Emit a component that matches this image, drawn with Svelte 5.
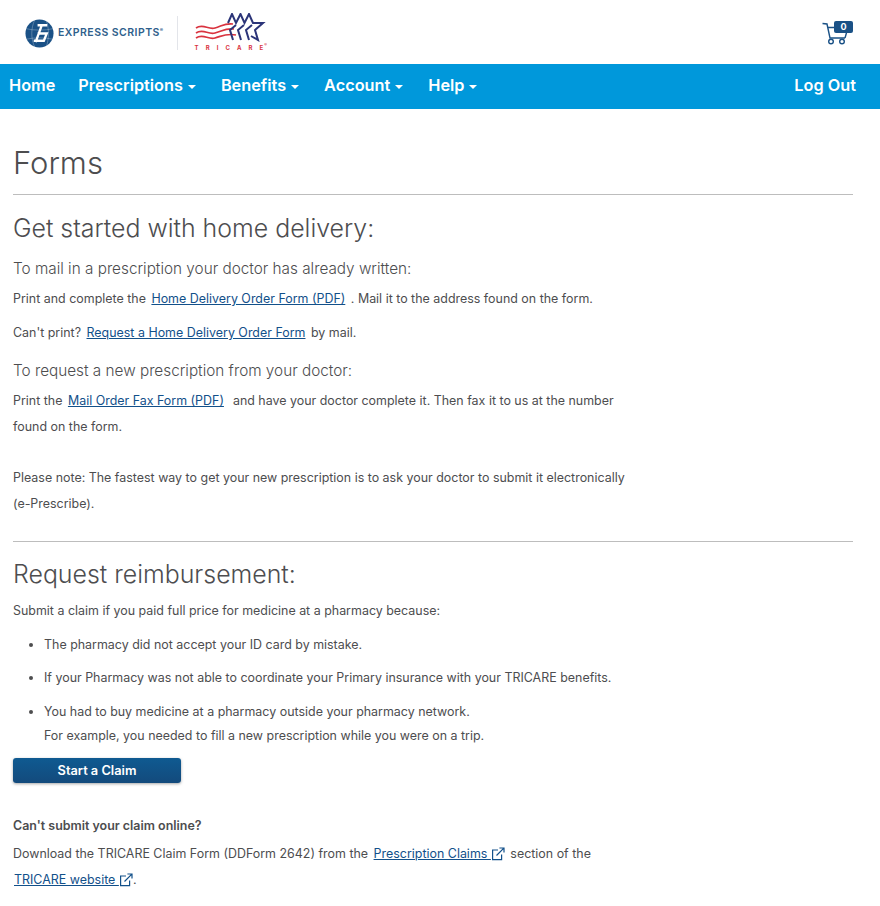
<script>
  const navItems = [
    { label: 'Prescriptions' },
    { label: 'Benefits' },
    { label: 'Account' },
    { label: 'Help' }
  ];
  const chevrons = [0, 1, 2];
</script>

{#snippet extIcon()}
  <svg class="ext" viewBox="0 0 14 14" width="14" height="14" fill="none" stroke="#12508a" stroke-width="1.2">
    <path d="M7 3H1.6v9.6h9V7.5" />
    <path d="M5.5 8.5 12.6 1.4M8.4 1h4.6v4.6" />
  </svg>
{/snippet}

<header class="top">
  <div class="logos">
    <svg class="es-mark" viewBox="0 0 30 30" width="29" height="29">
      <circle cx="15" cy="15" r="14.500" fill="#1a5186" />
      <path d="M1 10c8 2 20 2 28 0M1 21c8-2 20-2 28 0M10 1C6 10 6 20 10 29M22 1c3 9 3 19 0 28" fill="none" stroke="#fff" stroke-width="0.5" opacity="0.55" />
      <path d="M13 6.500h10M17.500 6 11 24M13 15h9.500l-3 7.500H9" fill="none" stroke="#fff" stroke-width="2.400" />
    </svg>
    <span class="es-name">EXPRESS SCRIPTS<sup>®</sup></span>
    <span class="logo-rule"></span>
    <div class="tricare">
      <svg viewBox="0 0 72 29" width="72" height="29" fill="none">
        <g stroke="#d9333f" stroke-width="1.700">
          <path d="M1 15c7-5 12 2 19 0s10-5 18-4" />
          <path d="M1 20c7-5 12 2 19 0s11-5 19-4" />
          <path d="M1 25c7-5 12 2 19 0s12-5 21-3" />
        </g>
        <g stroke="#2b3478" stroke-width="2">
          <path d="M33 10 37 1l4 9 4.500-9 4 9L54 1l4 9h10l-8 7 3 10-7-4" />
          {#each chevrons as c}
            <path d="M{41 + c * 8} 12l-6 5 3 10" />
          {/each}
        </g>
      </svg>
      <span class="tricare-name">TRICAR<span class="last">E</span><sup>®</sup></span>
    </div>
  </div>
  <div class="cart">
    <svg viewBox="0 0 31 24" width="31" height="24" fill="none" stroke="#1a5186" stroke-width="1.400">
      <path d="M0.500 2.500 5 3l3 14h15" />
      <path d="M6 6.500h10M25 10l-2 7" />
      <circle cx="9" cy="20.500" r="2.300" />
      <circle cx="20" cy="20.500" r="2.300" />
    </svg>
    <span class="badge">0</span>
  </div>
</header>

<nav class="nav">
  <a class="home" href="#home">Home</a>
  {#each navItems as item}
    <a href="#menu">{item.label}<span class="caret"></span></a>
  {/each}
  <a class="logout" href="#logout">Log Out</a>
</nav>

<main class="page">
  <h1>Forms</h1>
  <hr class="rule-first" />

  <h2>Get started with home delivery:</h2>
  <h3>To mail in a prescription your doctor has already written:</h3>
  <p class="lead">Print and complete the <a href="#pdf">Home Delivery Order Form (PDF)</a> . Mail it to the address found on the form.</p>
  <p>Can't print? <a href="#req">Request a Home Delivery Order Form</a> by mail.</p>

  <h3 class="second">To request a new prescription from your doctor:</h3>
  <p class="tall">Print the <a href="#fax">Mail Order Fax Form (PDF)</a>&nbsp; and have your doctor complete it. Then fax it to us at the number<br />found on the form.</p>
  <p class="tall note">Please note: The fastest way to get your new prescription is to ask your doctor to submit it electronically<br />(e-Prescribe).</p>

  <hr class="rule-second" />

  <h2 class="reimburse">Request reimbursement:</h2>
  <p>Submit a claim if you paid full price for medicine at a pharmacy because:</p>
  <ul>
    <li>The pharmacy did not accept your ID card by mistake.</li>
    <li>If your Pharmacy was not able to coordinate your Primary insurance with your TRICARE benefits.</li>
    <li>You had to buy medicine at a pharmacy outside your pharmacy network.<br />For example, you needed to fill a new prescription while you were on a trip.</li>
  </ul>

  <button class="claim">Start a Claim</button>

  <p class="strong">Can't submit your claim online?</p>
  <p>Download the TRICARE Claim Form (DDForm 2642) from the <a href="#claims">Prescription Claims {@render extIcon()}</a> section of the</p>
  <p class="site"><a href="#tricare">TRICARE website {@render extIcon()}</a>.</p>
</main>

<style>
  :global(body) {
    background: #fff;
    color: #4d4d4f;
    font-family: Inter, "Noto Sans", sans-serif;
    font-size: 12.45px;
  }

  .top {
    height: 64px;
    display: flex;
    align-items: center;
    justify-content: space-between;
    padding: 0 27px 0 25px;
  }

  .logos {
    display: flex;
    align-items: center;
  }

  .es-mark {
    margin-top: 2px;
  }

  .es-name {
    margin: 1px 0 0 4px;
    font-size: 10.5px;
    font-weight: 600;
    letter-spacing: 0.45px;
    color: #2f5f8c;
    white-space: nowrap;
  }

  sup {
    font-size: 5px;
    vertical-align: 4px;
    line-height: 0;
  }

  .logo-rule {
    width: 1px;
    height: 34px;
    margin: 2px 17px 0 13px;
    background: #e3e5ea;
  }

  .tricare {
    display: flex;
    flex-direction: column;
    align-items: flex-start;
    padding-top: 1px;
  }

  .tricare svg {
    display: block;
  }

  .tricare-name {
    font-size: 6px;
    font-weight: 700;
    letter-spacing: 7.1px;
    line-height: 8px;
    margin-top: 2px;
    color: #d9333f;
    white-space: nowrap;
  }

  .tricare-name .last {
    letter-spacing: 1px;
  }

  .tricare-name sup {
    letter-spacing: 0;
    font-size: 4px;
  }

  .cart {
    position: relative;
    width: 31px;
    height: 24px;
    margin-top: 2px;
  }

  .cart svg {
    display: block;
  }

  .badge {
    position: absolute;
    top: 0;
    right: 0;
    width: 19px;
    height: 12px;
    border-radius: 2px;
    background: #1a5186;
    color: #fff;
    font-size: 9px;
    font-weight: 700;
    line-height: 12px;
    text-align: center;
  }

  .nav {
    height: 45px;
    display: flex;
    align-items: center;
    gap: 25px;
    padding: 0 24px 4px 9px;
    background: #0098db;
    box-sizing: border-box;
  }

  .nav a {
    margin: 0;
    color: #fff;
    font-size: 16.3px;
    font-weight: 600;
    text-decoration: none;
    white-space: nowrap;
  }

  .nav .home {
    margin-right: -2px;
  }

  .caret {
    display: inline-block;
    margin-left: 5px;
    vertical-align: 2px;
    border-top: 4px solid #fff;
    border-left: 4px solid transparent;
    border-right: 4px solid transparent;
  }

  .nav .logout {
    margin-left: auto;
  }

  .page {
    width: 840px;
    margin-left: 13px;
    padding-top: 36px;
  }

  h1,
  h2,
  h3 {
    margin: 0;
    font-weight: 300;
    color: #4d4d4f;
  }

  h1 {
    font-size: 31px;
    line-height: 36px;
  }

  hr {
    margin: 0;
    border: 0;
    border-top: 1px solid #bdbdbd;
  }

  .rule-first {
    margin-top: 13px;
  }

  .rule-second {
    margin-top: 24px;
  }

  h2 {
    font-size: 24.9px;
    line-height: 30px;
    margin-top: 18px;
  }

  h2.reimburse {
    margin-top: 17px;
  }

  h3 {
    font-size: 15.3px;
    line-height: 20px;
    margin-top: 16px;
  }

  h3.second {
    margin-top: 16px;
  }

  p {
    margin: 10px 0 0;
    line-height: 24px;
  }

  p.lead {
    margin-top: 8px;
  }

  p.tall {
    line-height: 26px;
    margin-top: 7px;
  }

  p.note {
    margin-top: 25px;
  }

  a {
    color: #12508a;
    text-decoration: underline;
    margin: 0 2px;
  }

  .ext {
    vertical-align: -3px;
  }

  ul {
    margin: 7px 0 0;
    padding-left: 31px;
  }

  li {
    line-height: 24px;
    margin-top: 9.5px;
  }

  .claim {
    display: block;
    width: 168px;
    height: 25px;
    margin-top: 10px;
    border: 0;
    border-radius: 3px;
    background: linear-gradient(#0f5a91, #134a7c);
    box-shadow: 0 1px 3px rgba(0, 0, 0, 0.35);
    color: #fff;
    font: 600 12.8px Inter, sans-serif;
  }

  .strong {
    margin-top: 31px;
    font-weight: 600;
  }

  p.site {
    margin-top: 2px;
  }

  p.strong + p {
    margin-top: 4px;
  }

  .site a {
    margin: 0 0 0 1px;
  }
</style>
